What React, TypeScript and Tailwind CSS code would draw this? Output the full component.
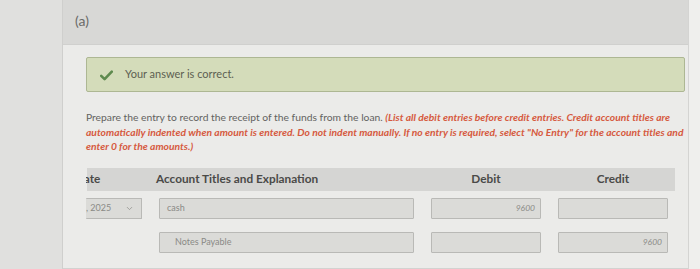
import { ChevronDown } from "lucide-react";

const inputCls =
  "h-[21px] rounded-[1px] border border-[#b9b9b6] bg-[#dbdbd8] text-[9px] text-[#8a8a86] flex items-center";

function AmountBox({ value }: { value?: string }) {
  return (
    <div className={`${inputCls} justify-end pr-[5px]`}>
      {value && <span className="italic text-[8.5px] text-[#8c8c88]">{value}</span>}
    </div>
  );
}

export default function App() {
  return (
    <div className="flex h-[269px] w-[700px] overflow-hidden bg-[#ebebe9] font-['Lato','Noto_Sans',sans-serif]">
      {/* left margin strip */}
      <div className="w-[63px] shrink-0 border-r border-[#cfcfcd] bg-[#e0e0de]" />

      {/* main panel */}
      <div className="flex w-[625px] shrink-0 flex-col">
        <div className="h-[45px] shrink-0 border-b border-[#d0d0ce] bg-[#d8d8d6] pl-[12px] pt-[12px] text-[14px] leading-[18px] text-[#6a6a68]">
          (a)
        </div>

        <div className="flex flex-1 flex-col border-b border-[#d2d2d0] pb-[12px] pl-[23px]">
          {/* answer banner */}
          <div className="mt-[12px] flex h-[35px] w-[599px] items-center rounded-[2px] border border-[#adb793] bg-[#d4dcba] pl-[13px]">
            <svg width="13" height="11" viewBox="0 0 13 11" className="mt-[1px]">
              <path d="M1.2 5.8 L4.6 9.2 L11.8 1.6" fill="none" stroke="#5e8a4e" strokeWidth="2.6" strokeLinecap="round" strokeLinejoin="round" />
            </svg>
            <span className="ml-[12px] text-[11px] text-[#5d5f52]">Your answer is correct.</span>
          </div>

          {/* instructions */}
          <p className="mt-[18px] w-[600px] text-[10.3px] leading-[14.5px] text-[#636361]">
            Prepare the entry to record the receipt of the funds from the loan.{" "}
            <span className="font-bold italic text-[#d65a3f]">
              (List all debit entries before credit entries. Credit account titles are automatically indented when
              amount is entered. Do not indent manually. If no entry is required, select "No Entry" for the account
              titles and enter 0 for the amounts.)
            </span>
          </p>

          {/* journal table */}
          <div className="mt-[14px] w-[589px] overflow-hidden pl-[1px]">
            <div className="grid h-[23px] grid-cols-[55px_255px_110px_110px] items-center gap-x-[17px] bg-[#d5d5d3] text-[11.8px] font-bold text-[#4a4a48]">
              <span className="-ml-[12px]">Date</span>
              <span className="-ml-[3px]">Account Titles and Explanation</span>
              <span className="text-center">Debit</span>
              <span className="text-center">Credit</span>
            </div>

            <div className="mt-[7px] grid grid-cols-[55px_255px_110px_110px] gap-x-[17px] gap-y-[13px]">
              <div className={`${inputCls} -ml-[1px] border-l-0 justify-between pr-[7px]`}>
                <span className="text-[#8a8a86]">, 2025</span>
                <ChevronDown size={9} strokeWidth={2} className="text-[#8e8e8a]" />
              </div>
              <div className={`${inputCls} pl-[7px]`}>cash</div>
              <AmountBox value="9600" />
              <AmountBox />

              <div />
              <div className={`${inputCls} pl-[15px]`}>Notes Payable</div>
              <AmountBox />
              <AmountBox value="9600" />
            </div>
          </div>
        </div>
      </div>

      {/* right edge */}
      <div className="flex-1 border-l border-[#d4d4d2] bg-[#efefed]" />
    </div>
  );
}
